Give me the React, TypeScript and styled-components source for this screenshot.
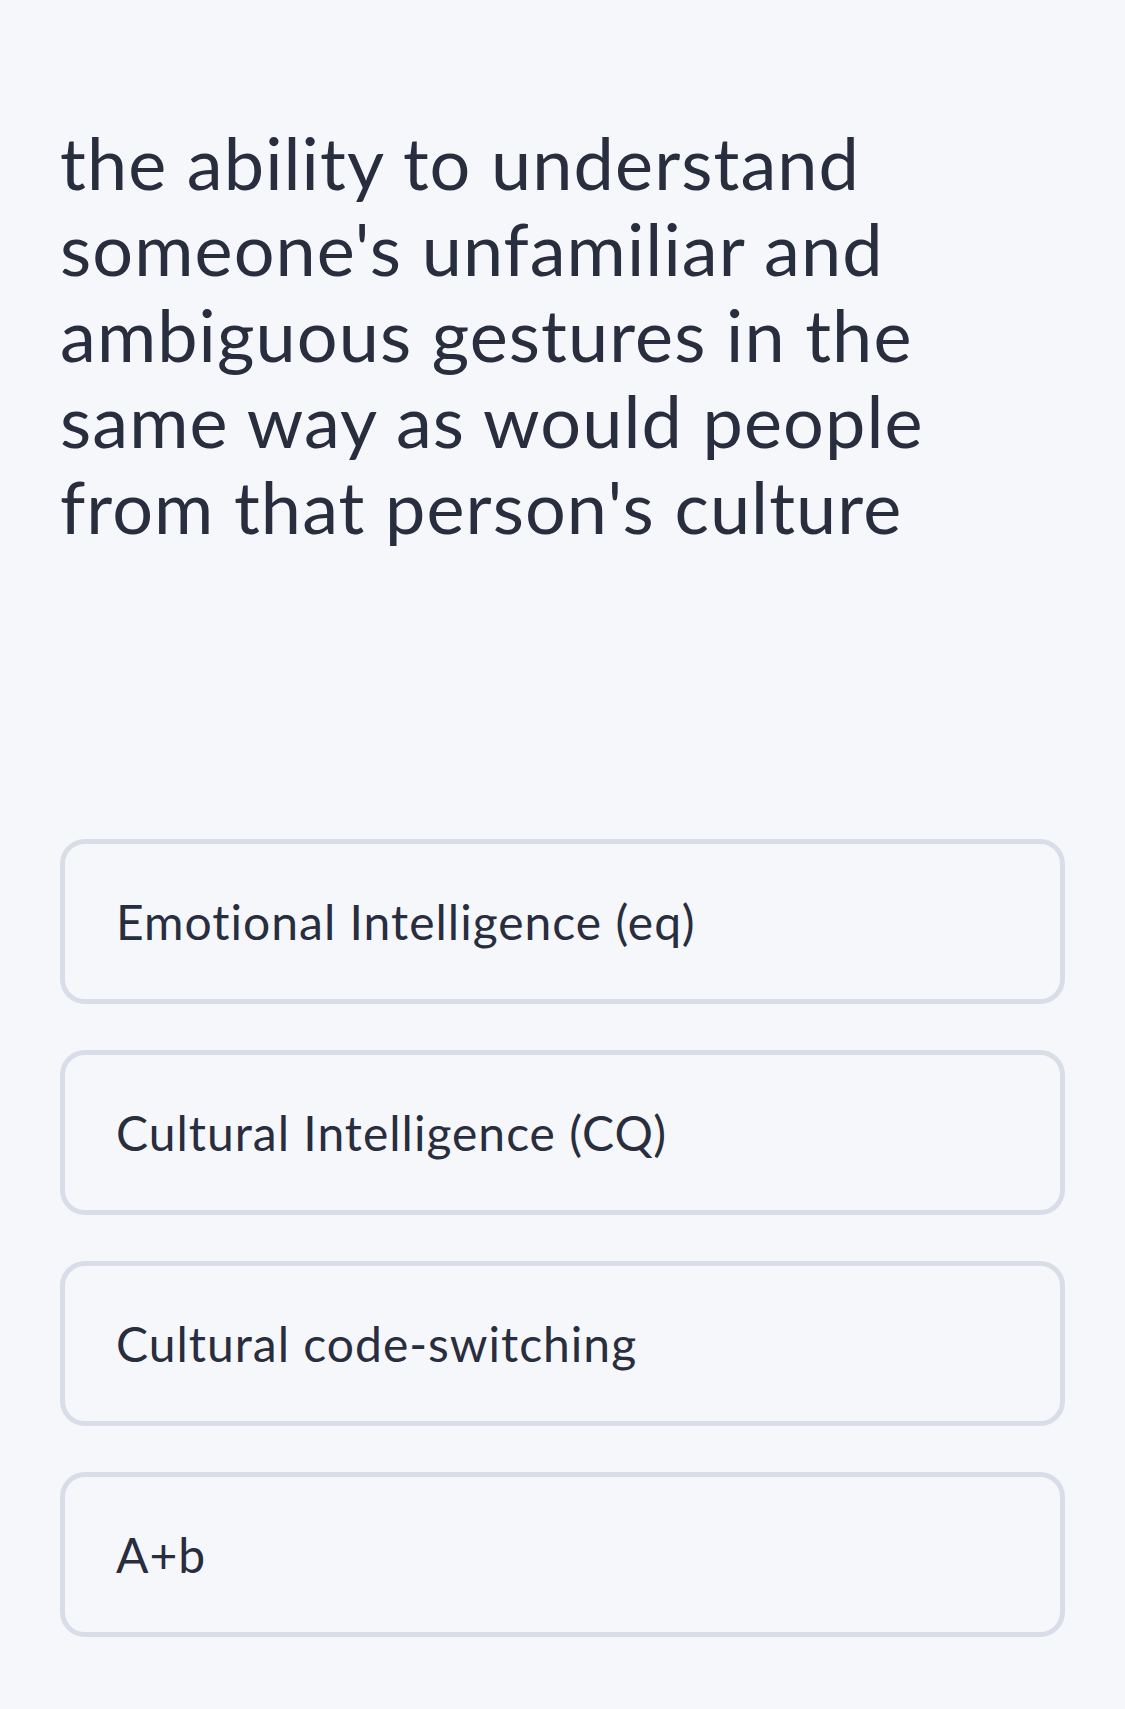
import React from "react";
import styled, { createGlobalStyle } from "styled-components";

const GlobalStyle = createGlobalStyle`
  html, body {
    margin: 0;
    padding: 0;
    background: #f6f7fb;
  }
  body {
    font-family: "Lato", "Open Sans", sans-serif;
    color: #282e3e;
    font-variant-ligatures: none;
  }
`;

const Page = styled.main`
  box-sizing: border-box;
  width: 1125px;
  min-height: 1709px;
  padding: 119px 60px 72px;
  background: #f6f7fb;
  display: flex;
  flex-direction: column;
`;

const Prompt = styled.h1`
  margin: 0;
  font-family: "Lato", sans-serif;
  font-weight: 400;
  font-size: 72px;
  line-height: 86px;
  letter-spacing: 1.1px;
  font-variant-ligatures: none;
  color: #282e3e;
  max-width: 990px;
`;

const Options = styled.div`
  margin-top: 290px;
  display: flex;
  flex-direction: column;
  gap: 46px;
`;

const Option = styled.button`
  box-sizing: border-box;
  height: 165px;
  width: 100%;
  display: flex;
  align-items: center;
  padding: 0 51px;
  border: 5px solid #d9dde8;
  border-radius: 25px;
  background: #f6f7fb;
  font-family: "Lato", sans-serif;
  font-size: 48px;
  font-weight: 400;
  letter-spacing: 1px;
  font-variant-ligatures: none;
  color: #282e3e;
  text-align: left;
  cursor: pointer;
`;

const options = [
  "Emotional Intelligence (eq)",
  "Cultural Intelligence (CQ)",
  "Cultural code-switching",
  "A+b",
];

export default function App() {
  return (
    <>
      <GlobalStyle />
      <Page>
        <Prompt>
          the ability to understand someone's unfamiliar and ambiguous gestures
          in the same way as would people from that person's culture
        </Prompt>
        <Options>
          {options.map((o) => (
            <Option key={o}>{o}</Option>
          ))}
        </Options>
      </Page>
    </>
  );
}
